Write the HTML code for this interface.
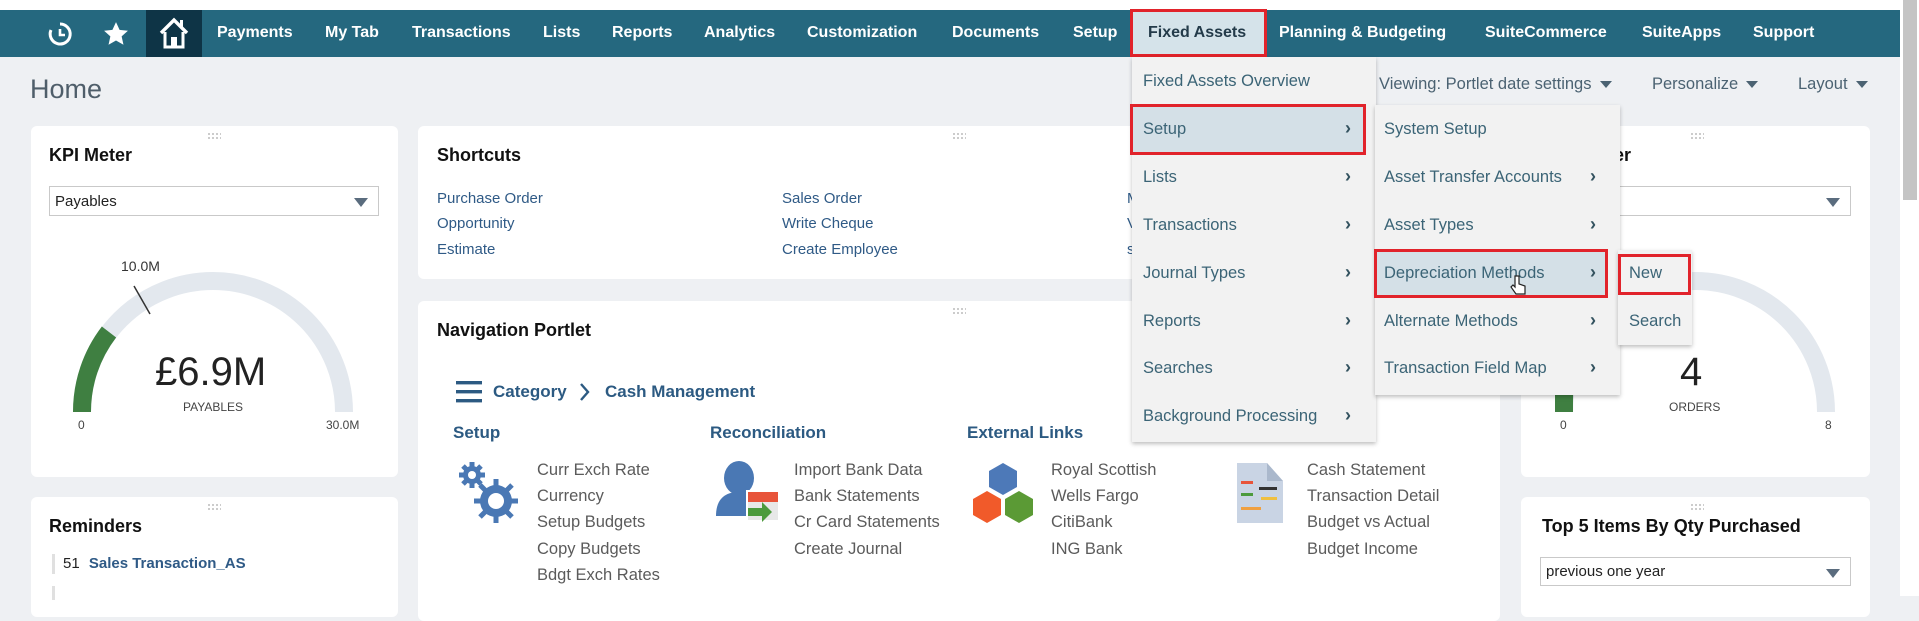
<!DOCTYPE html>
<html><head><meta charset="utf-8">
<style>
*{margin:0;padding:0;box-sizing:border-box}
body{width:1919px;height:596px;overflow:hidden;background:#eef0f3;font-family:"Liberation Sans",Arial,sans-serif;position:relative}
.a{position:absolute;white-space:nowrap}
#top{left:0;top:0;width:1919px;height:10px;background:#fff}
#nav{left:0;top:10px;width:1900px;height:47px;background:#25687f}
#home{left:146px;top:10px;width:56px;height:47px;background:#0e3446}
.ni{top:24px;color:#fff;font-weight:bold;font-size:16px}
#sb{left:1900px;top:0;width:19px;height:596px;background:#fff}
#thumb{left:1903px;top:0;width:14px;height:200px;background:#c4c4c4}
.card{position:absolute;background:#fff;border-radius:6px}
.ct{font-weight:bold;font-size:18px;color:#111}
.lk{font-size:15px;color:#2f5a86}
.sel{position:absolute;border:1px solid #c9c9c9;background:#fff;font-size:15px;color:#222;padding:6px 5px}
.sel:after{content:"";position:absolute;right:10px;top:11px;border-left:7px solid transparent;border-right:7px solid transparent;border-top:9px solid #5a6c7e}
.nh{font-weight:bold;font-size:17px;color:#2c5a82}
.it{font-size:16.5px;color:#5b5b5b;line-height:26.2px}
.menu{position:absolute;background:#f2f2f2;box-shadow:0 2px 4px rgba(0,0,0,.25)}
.mi{position:absolute;font-size:16.5px;color:#3b6476}
.ch{position:absolute;font-size:18px;color:#33525f;font-weight:bold}
.hl{position:absolute;background:#d4e0e7}
.rb{position:absolute;border:3px solid #e1232b}
.dots{position:absolute;width:14px;height:8px;background-image:radial-gradient(#c8c8c8 1px,transparent 1.2px);background-size:4px 4px}
.vw{top:75px;font-size:16.5px;color:#4b6272}
.tri{display:inline-block;width:0;height:0;border-left:6px solid transparent;border-right:6px solid transparent;border-top:7px solid #4b6272;margin-left:8px;vertical-align:middle}
</style></head><body>
<div class="a" id="top"></div>
<div class="a" id="nav"></div>
<div class="a" id="home"></div>
<svg class="a" style="left:46px;top:20px" width="28" height="28" viewBox="0 0 28 28"><path d="M14 4a10 10 0 1 1-9 6" fill="none" stroke="#fff" stroke-width="3"/><path d="M14 9v6h5" fill="none" stroke="#fff" stroke-width="2.6"/></svg>
<svg class="a" style="left:103px;top:21px" width="26" height="26" viewBox="0 0 24 24"><path d="M12 1l3.3 7.2 7.7.8-5.8 5.2 1.7 7.7L12 18l-6.9 3.9 1.7-7.7L1 9l7.7-.8z" fill="#fff"/></svg>
<svg class="a" style="left:158px;top:16px" width="32" height="34" viewBox="0 0 32 34"><path d="M3 17L16 4l13 13" fill="none" stroke="#fff" stroke-width="3.4"/><path d="M7 16v15h18V16" fill="none" stroke="#fff" stroke-width="3"/><rect x="13" y="21" width="6" height="10" fill="#fff"/><rect x="22" y="4" width="3" height="7" fill="#fff"/></svg>
<div class="a ni" style="left:217px">Payments</div>
<div class="a ni" style="left:325px">My Tab</div>
<div class="a ni" style="left:412px">Transactions</div>
<div class="a ni" style="left:543px">Lists</div>
<div class="a ni" style="left:612px">Reports</div>
<div class="a ni" style="left:704px">Analytics</div>
<div class="a ni" style="left:807px">Customization</div>
<div class="a ni" style="left:952px">Documents</div>
<div class="a ni" style="left:1073px">Setup</div>
<div class="a" style="left:1131px;top:10px;width:135px;height:47px;background:#d5e3ea"></div>
<div class="rb" style="left:1130px;top:9px;width:137px;height:48px"></div>
<div class="a ni" style="left:1148px;color:#243b4a">Fixed Assets</div>
<div class="a ni" style="left:1279px">Planning &amp; Budgeting</div>
<div class="a ni" style="left:1485px">SuiteCommerce</div>
<div class="a ni" style="left:1642px">SuiteApps</div>
<div class="a ni" style="left:1753px">Support</div>
<div class="a" id="sb"></div><div class="a" id="thumb"></div>

<div class="a" style="left:30px;top:74px;font-size:27px;color:#4f5e6a">Home</div>
<div class="a vw" style="left:1379px">Viewing: Portlet date settings<span class="tri"></span></div>
<div class="a vw" style="left:1652px">Personalize<span class="tri"></span></div>
<div class="a vw" style="left:1798px">Layout<span class="tri"></span></div>

<!-- KPI Meter -->
<div class="card" style="left:31px;top:126px;width:367px;height:351px"></div>
<div class="dots" style="left:207px;top:132px"></div>
<div class="a ct" style="left:49px;top:145px">KPI Meter</div>
<div class="sel" style="left:49px;top:186px;width:330px;height:30px">Payables</div>
<svg class="a" style="left:60px;top:262px" width="310" height="160" viewBox="0 0 310 160">
<path d="M22 150A131 131 0 0 1 284 150" fill="none" stroke="#e3e8ee" stroke-width="18"/>
<path d="M22 150A131 131 0 0 1 49 70" fill="none" stroke="#3f7f41" stroke-width="18"/>
<path d="M74 24L90 52" stroke="#333" stroke-width="1.5"/>
</svg>
<div class="a" style="left:121px;top:258px;font-size:14px;color:#333">10.0M</div>
<div class="a" style="left:155px;top:350px;font-size:40px;color:#222">£6.9M</div>
<div class="a" style="left:183px;top:400px;font-size:12px;color:#444">PAYABLES</div>
<div class="a" style="left:78px;top:418px;font-size:12px;color:#444">0</div>
<div class="a" style="left:326px;top:418px;font-size:12px;color:#444">30.0M</div>

<!-- Reminders -->
<div class="card" style="left:31px;top:497px;width:367px;height:120px"></div>
<div class="dots" style="left:207px;top:503px"></div>
<div class="a ct" style="left:49px;top:516px">Reminders</div>
<div class="a" style="left:52px;top:554px;width:3px;height:20px;background:#e0e0e0"></div>
<div class="a" style="left:63px;top:555px;font-size:15px;color:#222">51 <span style="color:#2f5a86;font-weight:bold;margin-left:5px">Sales Transaction_AS</span></div>
<div class="a" style="left:52px;top:586px;width:3px;height:14px;background:#e0e0e0"></div>

<!-- Shortcuts -->
<div class="card" style="left:418px;top:126px;width:1082px;height:153px"></div>
<div class="dots" style="left:952px;top:132px"></div>
<div class="a ct" style="left:437px;top:145px">Shortcuts</div>
<div class="a lk" style="left:437px;top:190px">Purchase Order</div>
<div class="a lk" style="left:437px;top:215px">Opportunity</div>
<div class="a lk" style="left:437px;top:241px">Estimate</div>
<div class="a lk" style="left:782px;top:190px">Sales Order</div>
<div class="a lk" style="left:782px;top:215px">Write Cheque</div>
<div class="a lk" style="left:782px;top:241px">Create Employee</div>
<div class="a lk" style="left:1127px;top:190px">M</div>
<div class="a lk" style="left:1127px;top:215px">V</div>
<div class="a lk" style="left:1127px;top:241px">s</div>

<!-- Navigation portlet -->
<div class="card" style="left:418px;top:301px;width:1082px;height:320px"></div>
<div class="dots" style="left:952px;top:307px"></div>
<div class="a ct" style="left:437px;top:320px">Navigation Portlet</div>
<svg class="a" style="left:456px;top:380px" width="26" height="24"><rect y="1" width="26" height="3.4" fill="#2c5a82"/><rect y="10" width="26" height="3.4" fill="#2c5a82"/><rect y="19" width="26" height="3.4" fill="#2c5a82"/></svg>
<div class="a nh" style="left:493px;top:382px">Category</div>
<svg class="a" style="left:579px;top:382px" width="12" height="20"><path d="M2 2l7 8-7 8" fill="none" stroke="#2c5a82" stroke-width="2.4"/></svg>
<div class="a nh" style="left:605px;top:382px">Cash Management</div>
<div class="a nh" style="left:453px;top:423px">Setup</div>
<div class="a nh" style="left:710px;top:423px">Reconciliation</div>
<div class="a nh" style="left:967px;top:423px">External Links</div>
<div class="a it" style="left:537px;top:457px">Curr Exch Rate<br>Currency<br>Setup Budgets<br>Copy Budgets<br>Bdgt Exch Rates</div>
<div class="a it" style="left:794px;top:457px">Import Bank Data<br>Bank Statements<br>Cr Card Statements<br>Create Journal</div>
<div class="a it" style="left:1051px;top:457px">Royal Scottish<br>Wells Fargo<br>CitiBank<br>ING Bank</div>
<div class="a it" style="left:1307px;top:457px">Cash Statement<br>Transaction Detail<br>Budget vs Actual<br>Budget Income</div>
<svg class="a" style="left:458px;top:461px" width="62" height="66" viewBox="0 0 62 66">
<g fill="#4a78b4"><circle cx="14" cy="14" r="9"/><circle cx="38" cy="40" r="16"/>
<g stroke="#4a78b4" stroke-width="5"><path d="M14 1v26M1 14h26M5 5l18 18M23 5L5 23"/><path d="M38 18v44M16 40h44M22 24l32 32M54 24L22 56"/></g></g>
<circle cx="14" cy="14" r="4" fill="#fff"/><circle cx="38" cy="40" r="8" fill="#fff"/></svg>
<svg class="a" style="left:714px;top:460px" width="66" height="66" viewBox="0 0 66 66">
<ellipse cx="25" cy="18" rx="15" ry="17" fill="#4a78b4"/><path d="M2 56c0-18 10-24 23-24s23 6 23 24z" fill="#4a78b4"/>
<rect x="32" y="30" width="32" height="30" fill="#fff"/><rect x="34" y="32" width="30" height="10" fill="#e8543a"/><rect x="34" y="42" width="30" height="18" fill="#e8e8e8"/>
<path d="M34 48h14v-6l10 10-10 10v-6h-14z" fill="#4c9a3c"/></svg>
<svg class="a" style="left:971px;top:461px" width="66" height="68" viewBox="0 0 66 68">
<path d="M32 2l14 8v16l-14 8-14-8V10z" fill="#4d79b8"/><path d="M16 30l14 8v16l-14 8-14-8V38z" fill="#f15a2a"/><path d="M48 30l14 8v16l-14 8-14-8V38z" fill="#5b9a35"/></svg>
<svg class="a" style="left:1235px;top:461px" width="50" height="64" viewBox="0 0 50 64">
<path d="M2 2h30l16 18v42H2z" fill="#c9d4e4"/><path d="M32 2v18h16" fill="#aab8cc"/>
<rect x="6" y="20" width="12" height="3" fill="#e8543a"/><rect x="24" y="26" width="18" height="3" fill="#333"/><rect x="6" y="32" width="12" height="3" fill="#4c9a3c"/><rect x="26" y="36" width="16" height="3" fill="#f0c040"/><rect x="6" y="46" width="20" height="3" fill="#f0a040"/></svg>

<!-- right cards -->
<div class="card" style="left:1521px;top:126px;width:349px;height:351px"></div>
<div class="dots" style="left:1690px;top:132px"></div>
<div class="a ct" style="left:1614px;top:145px">er</div>
<div class="sel" style="left:1540px;top:186px;width:311px;height:30px"></div>
<svg class="a" style="left:1540px;top:262px" width="310" height="160" viewBox="0 0 310 160">
<path d="M24 150A131 131 0 0 1 286 150" fill="none" stroke="#e3e8ee" stroke-width="18"/>
<path d="M24 150L24 128" fill="none" stroke="#3f7f41" stroke-width="18"/></svg>
<div class="a" style="left:1680px;top:350px;font-size:40px;color:#222">4</div>
<div class="a" style="left:1669px;top:400px;font-size:12px;color:#444">ORDERS</div>
<div class="a" style="left:1560px;top:418px;font-size:12px;color:#444">0</div>
<div class="a" style="left:1825px;top:418px;font-size:12px;color:#444">8</div>
<div class="card" style="left:1521px;top:497px;width:349px;height:120px"></div>
<div class="dots" style="left:1690px;top:503px"></div>
<div class="a ct" style="left:1542px;top:516px">Top 5 Items By Qty Purchased</div>
<div class="sel" style="left:1540px;top:557px;width:311px;height:29px;font-size:15px;padding-top:5px">previous one year</div>

<!-- menus -->
<div class="menu" style="left:1132px;top:57px;width:244px;height:385px"></div>
<div class="hl" style="left:1132px;top:106px;width:232px;height:47px"></div>
<div class="rb" style="left:1130px;top:104px;width:236px;height:51px"></div>
<div class="mi" style="left:1143px;top:72px">Fixed Assets Overview</div>
<div class="mi" style="left:1143px;top:120px">Setup</div>
<div class="mi" style="left:1143px;top:168px">Lists</div>
<div class="mi" style="left:1143px;top:216px">Transactions</div>
<div class="mi" style="left:1143px;top:264px">Journal Types</div>
<div class="mi" style="left:1143px;top:312px">Reports</div>
<div class="mi" style="left:1143px;top:359px">Searches</div>
<div class="mi" style="left:1143px;top:407px">Background Processing</div>
<div class="ch" style="left:1345px;top:118px">›</div>
<div class="ch" style="left:1345px;top:166px">›</div>
<div class="ch" style="left:1345px;top:214px">›</div>
<div class="ch" style="left:1345px;top:262px">›</div>
<div class="ch" style="left:1345px;top:310px">›</div>
<div class="ch" style="left:1345px;top:357px">›</div>
<div class="ch" style="left:1345px;top:405px">›</div>

<div class="menu" style="left:1375px;top:105px;width:245px;height:290px"></div>
<div class="hl" style="left:1375px;top:251px;width:230px;height:46px"></div>
<div class="rb" style="left:1374px;top:249px;width:234px;height:49px"></div>
<div class="mi" style="left:1384px;top:120px">System Setup</div>
<div class="mi" style="left:1384px;top:168px">Asset Transfer Accounts</div>
<div class="mi" style="left:1384px;top:216px">Asset Types</div>
<div class="mi" style="left:1384px;top:264px">Depreciation Methods</div>
<div class="mi" style="left:1384px;top:312px">Alternate Methods</div>
<div class="mi" style="left:1384px;top:359px">Transaction Field Map</div>
<div class="ch" style="left:1590px;top:166px">›</div>
<div class="ch" style="left:1590px;top:214px">›</div>
<div class="ch" style="left:1590px;top:262px">›</div>
<div class="ch" style="left:1590px;top:310px">›</div>
<div class="ch" style="left:1590px;top:357px">›</div>
<svg class="a" style="left:1510px;top:274px" width="18" height="22" viewBox="0 0 18 22"><path d="M5 2v11l-2-2-2 2 5 7h9v-8l-6-2V2z" fill="#fff" stroke="#222" stroke-width="1.2"/></svg>

<div class="menu" style="left:1618px;top:250px;width:74px;height:95px"></div>
<div class="rb" style="left:1618px;top:254px;width:73px;height:41px"></div>
<div class="mi" style="left:1629px;top:264px">New</div>
<div class="mi" style="left:1629px;top:312px">Search</div>
</body></html>
